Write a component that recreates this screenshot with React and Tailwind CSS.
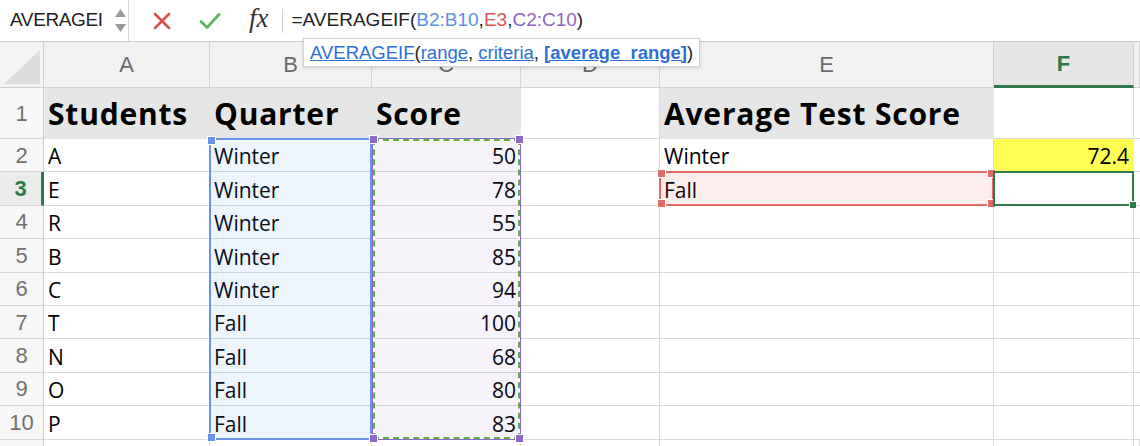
import React from 'react';

const cols = ['A', 'B', 'C', 'D', 'E', 'F', ''];

// sheet data: rows 1..10, columns A..F
const rows = [
    { n: 1, cells: ['Students', 'Quarter', 'Score', '', 'Average Test Score', ''] },
    { n: 2, cells: ['A', 'Winter', '50', '', 'Winter', '72.4'] },
    { n: 3, cells: ['E', 'Winter', '78', '', 'Fall', ''] },
    { n: 4, cells: ['R', 'Winter', '55', '', '', ''] },
    { n: 5, cells: ['B', 'Winter', '85', '', '', ''] },
    { n: 6, cells: ['C', 'Winter', '94', '', '', ''] },
    { n: 7, cells: ['T', 'Fall', '100', '', '', ''] },
    { n: 8, cells: ['N', 'Fall', '68', '', '', ''] },
    { n: 9, cells: ['O', 'Fall', '80', '', '', ''] },
    { n: 10, cells: ['P', 'Fall', '83', '', '', ''] },
];

const FONT = { fontFamily: '"Open Sans", Lato, sans-serif' };
const GRID = 'grid grid-cols-[44px_166px_162px_149px_139px_334px_140px_1fr] grid-rows-[46px_51px_repeat(9,33.4px)_1fr]';

function Handle({ pos, color }) {
    const place = {
        tl: '-left-[4px] -top-[4px]',
        tr: '-right-[4px] -top-[4px]',
        bl: '-left-[4px] -bottom-[4px]',
        br: '-right-[4px] -bottom-[4px]',
    }[pos];
    return <div className={`absolute ${place} w-[9px] h-[9px] border border-white ${color}`} />;
}

function Cell({ text, col, row }) {
    const header = row === 1;
    const grayFill = header && col !== 3 && col !== 5;
    const yellow = row === 2 && col === 5;
    const numeric = !header && (col === 2 || col === 5);
    let cls = 'border-r border-b border-[#dadada] bg-white';
    if (grayFill) cls = 'border-r border-b border-[#e6e6e6] bg-[#e6e6e6]';
    if (yellow) cls = 'border-r border-b border-[#fefe55] bg-[#fefe55]';
    return (
        <div
            className={`${cls} flex items-end px-[4px] overflow-visible whitespace-nowrap text-black leading-none ${numeric ? 'justify-end' : 'justify-start'} ${header ? 'text-[30px] font-bold pb-[9px] tracking-[0.8px]' : 'text-[21px] pb-[4px]'}`}
            style={FONT}
        >
            {text}
        </div>
    );
}

export default function App() {
    return (
        <div className="w-[1140px] h-[446px] overflow-hidden bg-white relative" style={{ fontFamily: '"Liberation Sans", Arial, sans-serif' }}>
            {/* formula bar */}
            <div className="h-[42px] flex items-center border-b border-[#c9c9c9] bg-white">
                <div className="w-[129px] h-full flex items-center pl-[10px] pr-[6px] border-r border-[#d6d6d6] gap-[12px]">
                    <span className="text-[19px] text-[#1e1e1e] tracking-[-0.4px]">AVERAGEI</span>
                    <div className="flex flex-col gap-[7px]">
                        <svg width="11" height="8" viewBox="0 0 11 8"><path d="M5.5 0L11 8H0z" fill="#9a9a9a" /></svg>
                        <svg width="11" height="8" viewBox="0 0 11 8"><path d="M0 0h11L5.5 8z" fill="#9a9a9a" /></svg>
                    </div>
                </div>
                <div className="flex items-center pl-[24px] gap-[28px]">
                    <svg width="18" height="18" viewBox="0 0 18 18">
                        <path d="M2 2L16 16M16 2L2 16" stroke="#dc4f4c" strokeWidth="2.6" strokeLinecap="round" />
                    </svg>
                    <svg width="22" height="18" viewBox="0 0 22 18">
                        <path d="M2 9.5L8 15.5L20 2.5" stroke="#5bb35a" strokeWidth="2.8" fill="none" strokeLinecap="round" strokeLinejoin="round" />
                    </svg>
                    <span className="text-[27px] italic text-[#333] -mt-[5px] leading-none" style={{ fontFamily: '"Liberation Serif", serif' }}>
                        fx
                    </span>
                </div>
                <div className="w-px h-[24px] bg-[#d0d0d0] ml-[13px]" />
                <div className="ml-[9px] text-[19px] text-[#1e1e1e]">
                    =AVERAGEIF(<span className="text-[#5d8fe3]">B2:B10</span>,<span className="text-[#dc534f]">E3</span>,<span className="text-[#8d64c6]">C2:C10</span>)
                </div>
            </div>

            <div className="relative h-[404px]">
                {/* sheet grid */}
                <div className={`${GRID} h-full`}>
                    {/* column headers */}
                    <div className="border-r border-b border-[#cfcfcf] bg-[#f3f3f3] flex items-end justify-end p-[3px]">
                        <svg width="36" height="34" viewBox="0 0 36 34"><path d="M36 0V34H0z" fill="#dcdcdc" /></svg>
                    </div>
                    {cols.map((c, i) => (
                        <div
                            key={i}
                            className={`border-r border-[#d3d3d3] flex items-center justify-center text-[22px] ${c === 'F' ? 'bg-[#e6e6e6] text-[#2b7a4b] font-bold border-b-[3px] border-b-[#2f7a4d]' : 'bg-[#f1f1f1] text-[#6a6a6a] border-b border-b-[#cfcfcf]'}`}
                        >
                            {c}
                        </div>
                    ))}

                    {/* rows */}
                    {rows.map((r) => (
                        <React.Fragment key={r.n}>
                            <div
                                className={`border-b border-[#d6d6d6] flex items-center justify-center text-[22px] ${r.n === 3 ? 'bg-[#ebebeb] text-[#2b7a4b] font-bold border-r-[3px] border-r-[#2f7a4d]' : 'bg-[#f7f7f7] text-[#707070] border-r border-r-[#cfcfcf]'}`}
                            >
                                {r.n}
                            </div>
                            {r.cells.map((t, ci) => (
                                <Cell key={ci} text={t} col={ci} row={r.n} />
                            ))}
                            <div className="border-b border-[#dadada] bg-white" />
                        </React.Fragment>
                    ))}

                    {/* row 11 */}
                    <div className="border-r border-[#cfcfcf] bg-[#f7f7f7]" />
                    {cols.map((c, i) => (
                        <div key={i} className="border-r border-[#dadada] bg-white" />
                    ))}
                </div>

                {/* range highlights drawn over the grid */}
                <div className={`${GRID} absolute inset-0 pointer-events-none`}>
                    {/* B2:B10 */}
                    <div className="col-start-3 row-start-3 row-end-12 relative -ml-[1px] -mt-[1px] border-2 border-[#6a93e6] bg-[#5d8fe3]/10">
                        <Handle pos="tl" color="bg-[#6a93e6]" />
                        <Handle pos="bl" color="bg-[#6a93e6]" />
                    </div>

                    {/* C2:C10, copied (marching ants) */}
                    <div className="col-start-4 row-start-3 row-end-12 relative -mt-[1px] border border-[#8c68c8]">
                        <div className="w-full h-full border-2 border-white outline-2 outline-dashed outline-[#5fae4a] -outline-offset-2 bg-[#8d64c6]/8" />
                        <Handle pos="tl" color="bg-[#8c68c8]" />
                        <Handle pos="tr" color="bg-[#8c68c8]" />
                        <Handle pos="bl" color="bg-[#8c68c8]" />
                        <Handle pos="br" color="bg-[#8c68c8]" />
                    </div>

                    {/* E3 */}
                    <div className="col-start-6 row-start-4 relative -mt-[1px] -ml-[1px] border-2 border-[#e06a68] bg-[#e0514f]/10">
                        <Handle pos="tl" color="bg-[#e06a68]" />
                        <Handle pos="tr" color="bg-[#e06a68]" />
                        <Handle pos="bl" color="bg-[#e06a68]" />
                        <Handle pos="br" color="bg-[#e06a68]" />
                    </div>

                    {/* F3 active cell */}
                    <div className="col-start-7 row-start-4 relative -mt-[1px] -ml-[1px] border-2 border-[#2f7a4d]">
                        <div className="absolute -right-[5px] -bottom-[5px] w-[8px] h-[8px] bg-[#2f7a4d] border border-white" />
                    </div>
                </div>
            </div>

            {/* function tooltip */}
            <div className="absolute left-[303px] top-[38px] w-[397px] h-[29px] bg-white border border-[#d2d2d2] shadow-[0_1px_3px_rgba(0,0,0,0.15)] flex items-center pl-[6px] text-[18.5px] text-[#222] z-20 whitespace-nowrap">
                <span className="text-[#2f6fd6] underline">AVERAGEIF</span>(
                <span className="text-[#2f6fd6] underline">range</span>,&nbsp;
                <span className="text-[#2f6fd6] underline">criteria</span>,&nbsp;
                <span className="text-[#2f6fd6] underline font-bold">[average_range]</span>)
            </div>
        </div>
    );
}
